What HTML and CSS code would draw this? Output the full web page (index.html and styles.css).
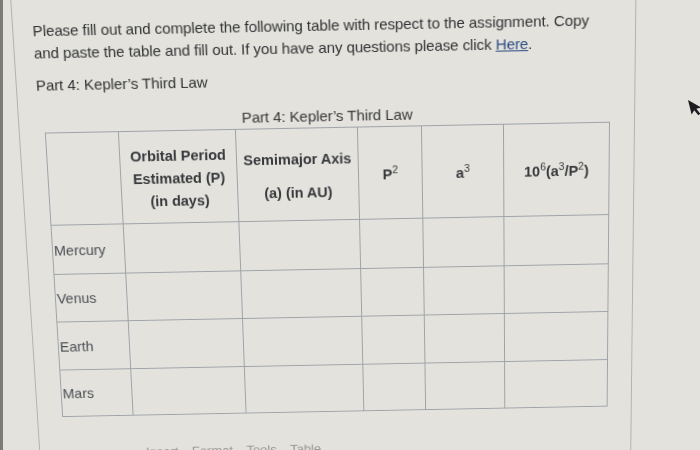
FILE: index.html
```html
<!DOCTYPE html>
<html lang="en">
<head>
<meta charset="utf-8">
<title>Part 4: Kepler's Third Law</title>
<link rel="stylesheet" href="styles.css">
</head>
<body>
<div class="photo">
  <div class="panel">
    <p class="intro">Please fill out and complete the following table with respect to the assignment. Copy and paste the table and fill out. If you have any questions please click <a href="#" class="link">Here</a>.</p>
    <p class="part">Part 4: Kepler’s Third Law</p>
    <table class="kepler">
      <caption>Part 4: Kepler’s Third Law</caption>
      <colgroup>
        <col class="c-name">
        <col class="c-period">
        <col class="c-axis">
        <col class="c-p2">
        <col class="c-a3">
        <col class="c-ratio">
      </colgroup>
      <thead>
        <tr>
          <th></th>
          <th>Orbital Period<br>Estimated (P)<br>(in days)</th>
          <th><div>Semimajor Axis</div><div class="second">(a) (in AU)</div></th>
          <th>P<sup>2</sup></th>
          <th>a<sup>3</sup></th>
          <th>10<sup>6</sup>(a<sup>3</sup>/P<sup>2</sup>)</th>
        </tr>
      </thead>
      <tbody>
        <tr><td>Mercury</td><td></td><td></td><td></td><td></td><td></td></tr>
        <tr><td>Venus</td><td></td><td></td><td></td><td></td><td></td></tr>
        <tr><td>Earth</td><td></td><td></td><td></td><td></td><td></td></tr>
        <tr><td>Mars</td><td></td><td></td><td></td><td></td><td></td></tr>
      </tbody>
    </table>
    <div class="menubar">
      <span>Insert</span><span>Format</span><span>Tools</span><span>Table</span>
    </div>
  </div>
</div>
<svg class="cursor" width="16" height="22" viewBox="0 0 16 22">
  <path transform="rotate(-14 2 2)" d="M2 2 L2 17 L5.6 13.4 L8.3 19.3 L10.6 18.3 L8 12.5 L13 12.5 Z" fill="#1d1d1f"/>
</svg>
</body>
</html>
```

FILE: styles.css
```css
html {
  height: 100%;
  overflow: hidden;
  background: linear-gradient(to right, #7b7b78 0, #7b7b78 3px, #e3e2dc 3px);
}

body {
  margin: 0;
  height: 100%;
  overflow: hidden;
  position: relative;
  font-family: "Liberation Sans", Arial, sans-serif;
  color: #333436;
}

.photo {
  width: 700px;
  margin-top: -40px;
  transform-origin: 385px 170px;
  transform: rotate(-1.1deg) perspective(1000px) rotateX(-7deg);
}

.panel {
  margin-left: 19px;
  width: 616px;
  height: 580px;
  box-sizing: border-box;
  border-left: 1px solid #b3b3ad;
  border-right: 1px solid #b3b3ad;
  padding: 54px 0 0 19px;
}

.intro {
  margin: 0;
  width: 560px;
  font-size: 15px;
  line-height: 22px;
  letter-spacing: -0.1px;
}

.link {
  color: #2e4d85;
  text-decoration: underline;
}

.part {
  margin: 10px 0 0;
  font-size: 15px;
  line-height: 22px;
  letter-spacing: -0.08px;
}

.kepler {
  margin: 14px 0 0 6px;
  width: 564px;
  table-layout: fixed;
  border-collapse: collapse;
}

.kepler caption {
  font-size: 15px;
  line-height: 22px;
  letter-spacing: -0.08px;
  color: #37383a;
}

.c-name { width: 73px; }
.c-period { width: 117px; }
.c-axis { width: 122px; }
.c-p2 { width: 64px; }
.c-a3 { width: 82px; }
.c-ratio { width: 106px; }

.kepler th,
.kepler td {
  border: 1px solid #9ea3a9;
  padding: 0;
  vertical-align: middle;
}

.kepler thead tr {
  height: 94px;
}

.kepler th {
  font-size: 14.5px;
  line-height: 23px;
  font-weight: bold;
  color: #36383c;
  text-align: center;
  padding-top: 4px;
}

.kepler th .second {
  margin-top: 11px;
}

.kepler sup {
  font-size: 0.72em;
  font-weight: normal;
  line-height: 0;
  vertical-align: 0.55em;
}

.kepler tbody tr {
  height: 50.5px;
}

.kepler td {
  font-size: 14.5px;
  line-height: 20px;
  color: #4b4f56;
  padding-left: 1px;
  padding-top: 2px;
}

.menubar {
  margin: 30px 0 0 91px;
  display: flex;
  gap: 14px;
  font-size: 13.5px;
  line-height: 20px;
  color: #969694;
}

.cursor {
  position: absolute;
  left: 686px;
  top: 98px;
}
```
